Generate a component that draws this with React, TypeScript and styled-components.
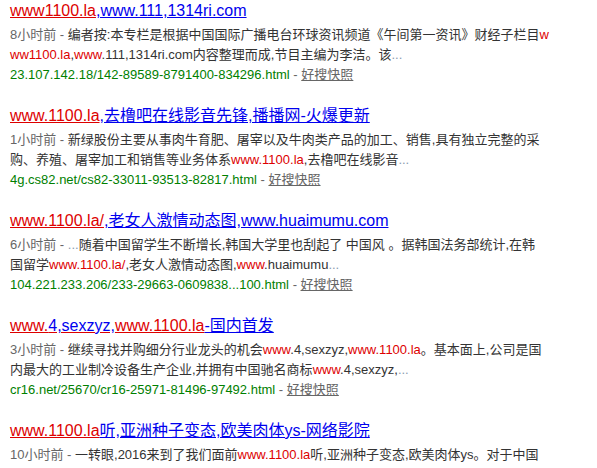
import styled, { createGlobalStyle } from "styled-components";

type Kind = "text" | "hl" | "time" | "dim";
type Seg = { t: string; k?: Kind };
type TitleSeg = { t: string; k: "hl" | "link" | "mixed" };

type Result = {
  title: TitleSeg[];
  lines: Seg[][];
  url?: string;
};

const results: Result[] = [
  {
    title: [
      { t: "www1100.la", k: "hl" },
      { t: ",www.111,1314ri.com", k: "link" },
    ],
    lines: [
      [
        { t: "8小时前 - ", k: "time" },
        { t: "编者按:本专栏是根据中国国际广播电台环球资讯频道《午间第一资讯》财经子栏目" },
        { t: "w", k: "hl" },
      ],
      [
        { t: "ww1100.la", k: "hl" },
        { t: "," },
        { t: "www", k: "hl" },
        { t: ".111,1314ri.com内容整理而成,节目主编为李洁。该" },
        { t: "...", k: "dim" },
      ],
    ],
    url: "23.107.142.18/142-89589-8791400-834296.html",
  },
  {
    title: [
      { t: "www.1100.la", k: "hl" },
      { t: ",去橹吧在线影音先锋,播播网-火爆更新", k: "link" },
    ],
    lines: [
      [
        { t: "1小时前 - ", k: "time" },
        { t: "新绿股份主要从事肉牛育肥、屠宰以及牛肉类产品的加工、销售,具有独立完整的采" },
      ],
      [
        { t: "购、养殖、屠宰加工和销售等业务体系" },
        { t: "www.1100.la", k: "hl" },
        { t: ",去橹吧在线影音" },
        { t: "...", k: "dim" },
      ],
    ],
    url: "4g.cs82.net/cs82-33011-93513-82817.html",
  },
  {
    title: [
      { t: "www.1100.la/", k: "hl" },
      { t: ",老女人激情动态图,www.huaimumu.com", k: "link" },
    ],
    lines: [
      [
        { t: "6小时前 - ", k: "time" },
        { t: "...", k: "dim" },
        { t: "随着中国留学生不断增长,韩国大学里也刮起了 中国风 。据韩国法务部统计,在韩" },
      ],
      [
        { t: "国留学" },
        { t: "www.1100.la/", k: "hl" },
        { t: ",老女人激情动态图," },
        { t: "www", k: "hl" },
        { t: ".huaimumu" },
        { t: "...", k: "dim" },
      ],
    ],
    url: "104.221.233.206/233-29663-0609838...100.html",
  },
  {
    title: [
      { t: "www.", k: "hl" },
      { t: "4,sexzyz,", k: "mixed" },
      { t: "www.1100.la", k: "hl" },
      { t: "-国内首发", k: "link" },
    ],
    lines: [
      [
        { t: "3小时前 - ", k: "time" },
        { t: "继续寻找并购细分行业龙头的机会" },
        { t: "www", k: "hl" },
        { t: ".4,sexzyz," },
        { t: "www.1100.la", k: "hl" },
        { t: "。基本面上,公司是国" },
      ],
      [
        { t: "内最大的工业制冷设备生产企业,并拥有中国驰名商标" },
        { t: "www", k: "hl" },
        { t: ".4,sexzyz," },
        { t: "...", k: "dim" },
      ],
    ],
    url: "cr16.net/25670/cr16-25971-81496-97492.html",
  },
  {
    title: [
      { t: "www.1100.la", k: "hl" },
      { t: "听,亚洲种子变态,欧美肉体ys-网络影院", k: "link" },
    ],
    lines: [
      [
        { t: "10小时前 - ", k: "time" },
        { t: "一转眼,2016来到了我们面前" },
        { t: "www.1100.la", k: "hl" },
        { t: "听,亚洲种子变态,欧美肉体ys。对于中国" },
      ],
    ],
  },
];

const RED = "#dd0000";
const BLUE = "#0000ee";

const GlobalStyle = createGlobalStyle`
  html, body {
    margin: 0;
    padding: 0;
    background: #fff;
    overflow: hidden;
  }
  body {
    font-family: "Liberation Sans", Arial, "Noto Sans CJK SC", sans-serif;
  }
`;

const Styled = {
  Page: styled.div`
    padding: 1px 10px 0;
  `,

  Result: styled.div`
    margin-bottom: 21px;
  `,

  Title: styled.h3`
    margin: 0;
    font-size: 16px;
    font-weight: normal;
    line-height: 20px;
    white-space: nowrap;
  `,

  TitleSeg: styled.a<{ $kind: "hl" | "link" | "mixed" }>`
    color: ${(p) => (p.$kind === "hl" ? RED : BLUE)};
    text-decoration: underline;
    text-decoration-color: ${(p) => (p.$kind === "link" ? BLUE : RED)};
    text-underline-offset: 1px;
    cursor: pointer;
  `,

  Desc: styled.div`
    margin-top: 4px;
    font-size: 13px;
    line-height: 20px;
    color: #333;
  `,

  Line: styled.div`
    white-space: nowrap;
  `,

  Seg: styled.span<{ $kind: Kind }>`
    color: ${(p) =>
      p.$kind === "hl"
        ? RED
        : p.$kind === "time"
        ? "#666"
        : p.$kind === "dim"
        ? "#8a9bb0"
        : "#333"};
  `,

  UrlLine: styled.div`
    font-size: 13px;
    line-height: 20px;
    white-space: nowrap;
  `,

  Url: styled.span`
    color: #008000;
  `,

  Sep: styled.span`
    color: #666;
  `,

  Snapshot: styled.a`
    color: #666;
    text-decoration: underline;
    cursor: pointer;
  `,
};

const App = () => {
  return (
    <>
      <GlobalStyle />
      <Styled.Page>
        {results.map((r, i) => (
          <Styled.Result key={i}>
            <Styled.Title>
              {r.title.map((s, j) => (
                <Styled.TitleSeg key={j} $kind={s.k}>
                  {s.t}
                </Styled.TitleSeg>
              ))}
            </Styled.Title>
            <Styled.Desc>
              {r.lines.map((line, j) => (
                <Styled.Line key={j}>
                  {line.map((s, n) => (
                    <Styled.Seg key={n} $kind={s.k ?? "text"}>
                      {s.t}
                    </Styled.Seg>
                  ))}
                </Styled.Line>
              ))}
            </Styled.Desc>
            {r.url && (
              <Styled.UrlLine>
                <Styled.Url>{r.url}</Styled.Url>
                <Styled.Sep> - </Styled.Sep>
                <Styled.Snapshot>好搜快照</Styled.Snapshot>
              </Styled.UrlLine>
            )}
          </Styled.Result>
        ))}
      </Styled.Page>
    </>
  );
};

export default App;
